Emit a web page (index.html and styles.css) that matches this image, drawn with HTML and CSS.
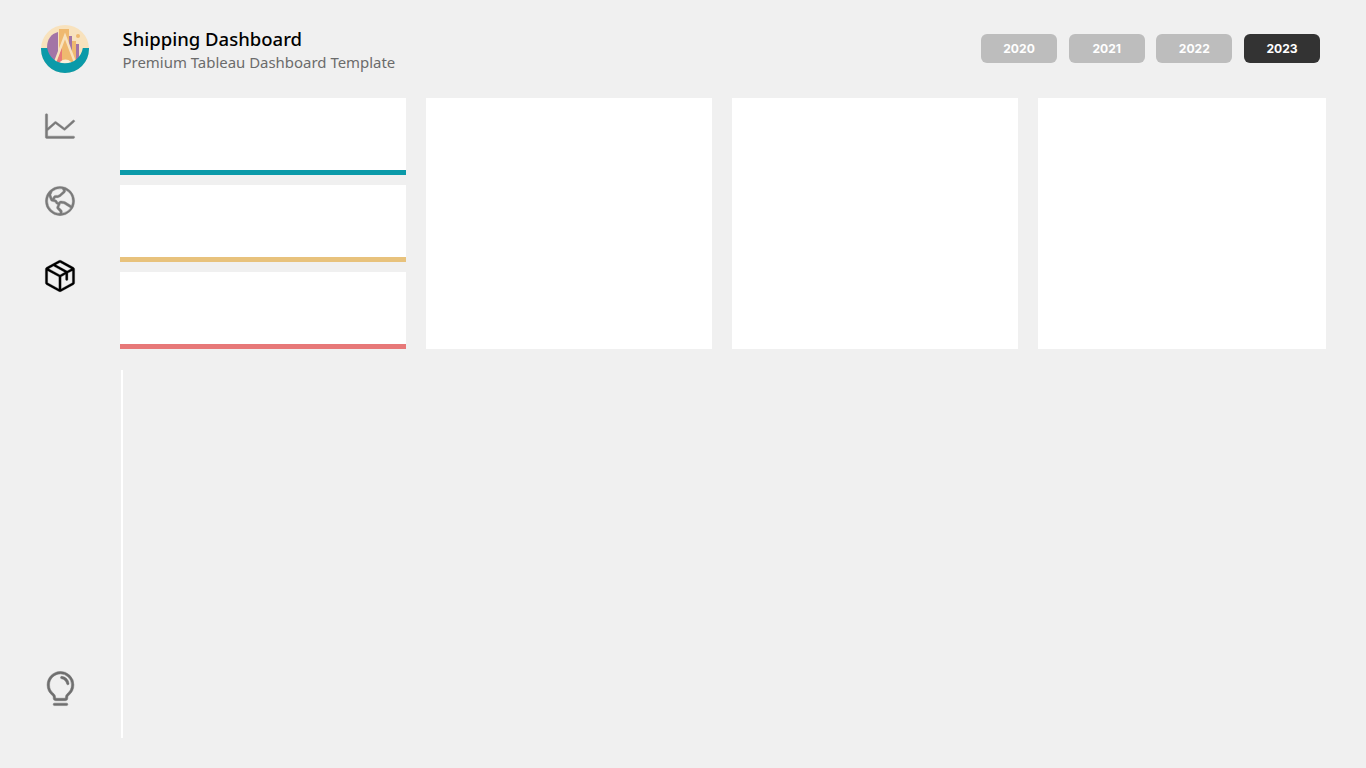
FILE: index.html
```html
<!DOCTYPE html>
<html lang="en">
<head>
<meta charset="utf-8">
<title>Shipping Dashboard</title>
<link rel="stylesheet" href="styles.css">
</head>
<body>
<div class="page">
  <aside class="sidebar">
    <svg class="logo" viewBox="0 0 50 50" width="50" height="50" aria-label="Logo">
      <circle cx="25" cy="25" r="24" fill="#f8e2bd"/>
      <path d="M7 40V24C7 15 11 10 18 8V42Z" fill="#a374a6"/>
      <path d="M19 5H29V42H19Z" fill="#efb96f"/>
      <path d="M29 12H32V42H29Z" fill="#a374a6"/>
      <path d="M32 17H36V42H32Z" fill="#efb96f"/>
      <path d="M36 20H39V40H36Z" fill="#a374a6"/>
      <path d="M14 41L25 12L36 41Z" fill="#efb96f"/>
      <path d="M15 41L22 23V41Z" fill="#e77878"/>
      <path d="M14 41L25 12L36 41" fill="none" stroke="#f8e2bd" stroke-width="2.4"/>
      <circle cx="38" cy="12" r="2" fill="#efb96f"/>
      <path d="M18 43A7.5 7.5 0 0 1 33 43Z" fill="#fbf0dc"/>
      <path d="M1 24H7.2A18 18 0 0 0 42.8 24H49V25A24 24 0 0 1 1 25Z" fill="#0b9aa9"/>
    </svg>
    <nav class="nav">
      <svg class="icon" viewBox="0 0 256 256"><path d="M232,208a8,8,0,0,1-8,8H32a8,8,0,0,1-8-8V48a8,8,0,0,1,16,0v94.37L90.73,97.99a8,8,0,0,1,10.07-.38l58.81,44.11L218.73,88a8,8,0,1,1,10.54,12l-64,56a8,8,0,0,1-10.07.38L96.39,112.29,40,161.63V200H224A8,8,0,0,1,232,208Z"/></svg>
      <svg class="icon" viewBox="0 0 256 256"><path d="M128,24A104,104,0,1,0,232,128,104.11,104.11,0,0,0,128,24Zm88,104a87.62,87.62,0,0,1-6.4,32.94l-44.7-27.49a15.92,15.92,0,0,0-6.24-2.23l-22.82-3.08a16.11,16.11,0,0,0-16,7.86h-8.72l-3.8-7.86a15.91,15.91,0,0,0-11-8.67l-8-1.73L96.14,104h16.71a16.06,16.06,0,0,0,7.73-2l12.25-6.76a16.62,16.62,0,0,0,3-2.14l26.91-24.34A15.93,15.93,0,0,0,166,49.1l-.36-.65A88.11,88.11,0,0,1,216,128ZM143.31,41.34,152,56.9,125.09,81.24,112.85,88H96.14a16,16,0,0,0-13.88,8l-8.73,15.23L63.38,84.19,74.32,58.32a87.87,87.87,0,0,1,69-17ZM40,128a87.53,87.53,0,0,1,8.54-37.8l11.34,30.27a16,16,0,0,0,11.62,10l21.43,4.61L96.74,143a16.09,16.09,0,0,0,14.4,9h1.48l-7.23,16.23a16,16,0,0,0,2.86,17.37l.14.14L128,205.94l-1.94,10A88.11,88.11,0,0,1,40,128Zm102.58,86.78,1.56-8.06a16.09,16.09,0,0,0-4-13.9l-19.71-20.3,12.39-27.79,22.82,3.08,47.8,29.4A88.18,88.18,0,0,1,142.58,214.78Z"/></svg>
      <svg class="icon icon-active" viewBox="0 0 256 256"><path d="M223.68,66.15,135.68,18a15.88,15.88,0,0,0-15.36,0l-88,48.17a16,16,0,0,0-8.32,14v95.64a16,16,0,0,0,8.32,14l88,48.17a15.88,15.88,0,0,0,15.36,0l88-48.17a16,16,0,0,0,8.32-14V80.18A16,16,0,0,0,223.68,66.15ZM128,32l80.34,44-29.77,16.3-80.35-44ZM128,120,47.66,76l33.9-18.56,80.34,44ZM40,90l80,43.78v85.79L40,175.82Zm176,85.78h0l-80,43.79V133.82l32-17.51V152a8,8,0,0,0,16,0V107.55L216,90v85.77Z"/></svg>
    </nav>
    <svg class="icon icon-bulb" viewBox="0 0 256 256"><path d="M176,232a8,8,0,0,1-8,8H88a8,8,0,0,1,0-16h80A8,8,0,0,1,176,232Zm40-128a87.55,87.55,0,0,1-33.64,69.21A16.24,16.24,0,0,0,176,186v6a16,16,0,0,1-16,16H96a16,16,0,0,1-16-16v-6a16,16,0,0,0-6.23-12.66A87.59,87.59,0,0,1,40,104.49C39.74,56.83,78.26,17.14,125.88,16A88,88,0,0,1,216,104Zm-16,0a72,72,0,0,0-73.74-72c-39,.92-70.47,33.39-70.26,72.39a71.65,71.65,0,0,0,27.64,56.3A32,32,0,0,1,96,186v6h64v-6a32.15,32.15,0,0,1,12.47-25.35A71.65,71.65,0,0,0,200,104Zm-16.11-9.34a57.6,57.6,0,0,0-46.56-46.55,8,8,0,0,0-2.66,15.78c16.57,2.79,30.63,16.85,33.44,33.45A8,8,0,0,0,176,104a9,9,0,0,0,1.35-.11A8,8,0,0,0,183.89,94.66Z"/></svg>
  </aside>
  <main class="main">
    <header class="header">
      <div class="titles">
        <h1 class="title">Shipping Dashboard</h1>
        <p class="subtitle">Premium Tableau Dashboard Template</p>
      </div>
      <div class="years">
        <div class="year">2020</div>
        <div class="year">2021</div>
        <div class="year">2022</div>
        <div class="year year-active">2023</div>
      </div>
    </header>
    <section class="cards">
      <div class="stack">
        <div class="stat stat-teal"></div>
        <div class="stat stat-gold"></div>
        <div class="stat stat-red"></div>
      </div>
      <div class="card"></div>
      <div class="card"></div>
      <div class="card"></div>
    </section>
    <div class="rule"></div>
  </main>
</div>
</body>
</html>
```
FILE: styles.css
```css
* { box-sizing: border-box; }
html, body { margin: 0; padding: 0; }
body { background: #f0f0f0; font-family: "Noto Sans", sans-serif; }
.page { display: flex; width: 1366px; height: 768px; overflow: hidden; }

.sidebar { width: 120px; flex: none; display: flex; flex-direction: column; padding-top: 24px; padding-bottom: 60.5px; }
.logo { display: block; margin-left: 40px; flex: none; }
.nav { display: flex; flex-direction: column; gap: 39px; margin-top: 33.5px; margin-left: 42px; }
.icon { display: block; width: 36px; height: 36px; flex: none; fill: #7a7a7a; stroke: #7a7a7a; stroke-width: 3; }
.icon-active { fill: #000; stroke: #000; stroke-width: 2; }
.icon-bulb { width: 39px; height: 39px; margin-top: auto; margin-left: 40.5px; fill: #6f6f6f; stroke: #6f6f6f; }

.main { flex: 1; display: flex; flex-direction: column; min-width: 0; }
.header { height: 98px; flex: none; display: flex; justify-content: space-between; padding: 34px 46px 0 2.5px; }
.titles { margin-top: -7px; }
.title { margin: 0; font-size: 18.5px; line-height: 24px; font-weight: 500; color: #000; }
.subtitle { margin: 0; font-size: 14.95px; line-height: 22px; font-weight: 400; color: #6b6b6b; }
.years { display: flex; gap: 11.67px; height: 29px; }
.year { width: 76px; height: 29px; border-radius: 6px; background: #bdbdbd; color: #fff; font-family: Inter, sans-serif; font-size: 12.1px; font-weight: 700; line-height: 29px; text-align: center; }
.year-active { background: #333; }

.cards { display: grid; grid-template-columns: 286px 286px 286px 288px; column-gap: 20px; height: 251px; flex: none; }
.stack { display: grid; grid-template-rows: repeat(3, 77px); row-gap: 10px; }
.stat { background: #fff; border-bottom: 5px solid; }
.stat-teal { border-color: #0b9aa9; }
.stat-gold { border-color: #e8c27c; }
.stat-red { border-color: #e77878; }
.card { background: #fff; }
.rule { width: 2px; height: 368px; margin: 21px 0 0 1px; background: #fff; flex: none; }
```
